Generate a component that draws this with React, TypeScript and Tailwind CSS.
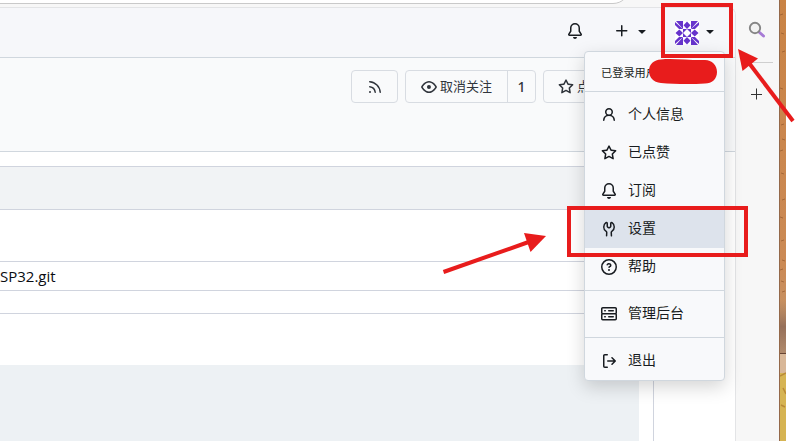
import type { ReactNode } from "react";

const ICONS = {
  bell: "M8 16a2 2 0 0 0 1.985-1.75c.017-.137-.097-.25-.235-.25h-3.5c-.138 0-.252.113-.235.25A2 2 0 0 0 8 16ZM3 5a5 5 0 0 1 10 0v2.947c0 .05.015.098.042.139l1.703 2.555A1.519 1.519 0 0 1 13.482 13H2.518a1.516 1.516 0 0 1-1.263-2.36l1.703-2.554A.255.255 0 0 0 3 7.947Zm5-3.5A3.5 3.5 0 0 0 4.5 5v2.947c0 .346-.102.683-.294.97l-1.703 2.556a.017.017 0 0 0-.003.01l.001.006c0 .002.002.004.004.006l.006.004.007.001h10.964l.007-.001.006-.004.004-.006.001-.007a.017.017 0 0 0-.003-.01l-1.703-2.554a1.745 1.745 0 0 1-.294-.97V5A3.5 3.5 0 0 0 8 1.5Z",
  plus: "M7.75 2a.75.75 0 0 1 .75.75V7h4.25a.75.75 0 0 1 0 1.5H8.5v4.25a.75.75 0 0 1-1.5 0V8.5H2.75a.75.75 0 0 1 0-1.5H7V2.75A.75.75 0 0 1 7.75 2Z",
  triangleDown: "m4.427 7.427 3.396 3.396a.25.25 0 0 0 .354 0l3.396-3.396A.25.25 0 0 0 11.396 7H4.604a.25.25 0 0 0-.177.427Z",
  rss: "M2.002 2.725a.75.75 0 0 1 .797-.699C8.79 2.42 13.58 7.21 13.974 13.201a.75.75 0 0 1-1.497.098 10.502 10.502 0 0 0-9.776-9.776.747.747 0 0 1-.7-.798ZM2.84 7.05h-.002a7.002 7.002 0 0 1 6.113 6.111.75.75 0 0 1-1.49.178 5.503 5.503 0 0 0-4.8-4.8.75.75 0 0 1 .179-1.489ZM2 13a1 1 0 1 1 2 0 1 1 0 0 1-2 0Z",
  eye: "M8 2c1.981 0 3.671.992 4.933 2.078 1.27 1.091 2.187 2.345 2.637 3.023a1.62 1.62 0 0 1 0 1.798c-.45.678-1.367 1.932-2.637 3.023C11.67 13.008 9.981 14 8 14c-1.981 0-3.671-.992-4.933-2.078C1.797 10.83.88 9.576.43 8.898a1.62 1.62 0 0 1 0-1.798c.45-.677 1.367-1.931 2.637-3.022C4.33 2.992 6.019 2 8 2ZM1.679 7.932a.12.12 0 0 0 0 .136c.411.622 1.241 1.75 2.366 2.717C5.176 11.758 6.527 12.5 8 12.5c1.473 0 2.825-.742 3.955-1.715 1.124-.967 1.954-2.096 2.366-2.717a.12.12 0 0 0 0-.136c-.412-.621-1.242-1.75-2.366-2.717C10.824 4.242 9.473 3.5 8 3.5c-1.473 0-2.825.742-3.955 1.715-1.124.967-1.954 2.096-2.366 2.717ZM8 10a2 2 0 1 1-.001-3.999A2 2 0 0 1 8 10Z",
  star: "M8 .25a.75.75 0 0 1 .673.418l1.882 3.815 4.21.612a.75.75 0 0 1 .416 1.279l-3.046 2.97.719 4.192a.751.751 0 0 1-1.088.791L8 12.347l-3.766 1.98a.75.75 0 0 1-1.088-.79l.72-4.194L.818 6.374a.75.75 0 0 1 .416-1.28l4.21-.611L7.327.668A.75.75 0 0 1 8 .25Zm0 2.445L6.615 5.5a.75.75 0 0 1-.564.41l-3.097.45 2.24 2.184a.75.75 0 0 1 .216.664l-.528 3.084 2.769-1.456a.75.75 0 0 1 .698 0l2.77 1.456-.53-3.084a.75.75 0 0 1 .216-.664l2.24-2.183-3.096-.45a.75.75 0 0 1-.564-.41L8 2.694Z",
  person: "M10.561 8.073a6.005 6.005 0 0 1 3.432 5.142.75.75 0 1 1-1.498.07 4.5 4.5 0 0 0-8.99 0 .75.75 0 0 1-1.498-.07 6.004 6.004 0 0 1 3.431-5.142 3.999 3.999 0 1 1 5.123 0ZM10.5 5a2.5 2.5 0 1 0-5 0 2.5 2.5 0 0 0 5 0Z",
  tools: "M5.433 2.304A4.492 4.492 0 0 0 3.5 6c0 1.598.832 3.002 2.09 3.802.518.328.929.923.902 1.64v.008l-.164 3.337a.75.75 0 1 1-1.498-.073l.163-3.33c.002-.085-.05-.216-.207-.316A5.996 5.996 0 0 1 2 6a5.993 5.993 0 0 1 2.567-4.92 1.482 1.482 0 0 1 1.673-.04c.462.296.76.827.76 1.423v2.82c0 .082.041.16.11.206l.75.51a.25.25 0 0 0 .28 0l.75-.51A.249.249 0 0 0 9 5.282V2.463c0-.596.298-1.127.76-1.423a1.482 1.482 0 0 1 1.673.04A5.993 5.993 0 0 1 14 6a5.996 5.996 0 0 1-2.786 5.068c-.157.1-.209.23-.207.315l.163 3.33a.752.752 0 0 1-1.094.714.75.75 0 0 1-.404-.64l-.164-3.345c-.027-.717.384-1.312.902-1.64A4.495 4.495 0 0 0 12.5 6a4.492 4.492 0 0 0-1.933-3.696c-.024.017-.067.067-.067.16v2.818a1.75 1.75 0 0 1-.767 1.448l-.75.51a1.75 1.75 0 0 1-1.966 0l-.75-.51A1.75 1.75 0 0 1 5.5 5.282V2.463c0-.092-.043-.142-.067-.159Z",
  question: "M0 8a8 8 0 1 1 16 0A8 8 0 0 1 0 8Zm8-6.5a6.5 6.5 0 1 0 0 13 6.5 6.5 0 0 0 0-13ZM6.92 6.085h.001a.749.749 0 1 1-1.342-.67c.169-.339.436-.701.849-.977C6.845 4.16 7.369 4 8 4a2.756 2.756 0 0 1 1.637.525c.503.377.863.965.863 1.725 0 .448-.115.83-.329 1.15-.205.307-.47.513-.692.662-.109.072-.22.138-.313.195l-.006.004a6.24 6.24 0 0 0-.26.16.952.952 0 0 0-.276.245.75.75 0 0 1-1.248-.832c.184-.264.42-.489.692-.661.103-.067.207-.132.313-.195l.007-.004c.1-.061.182-.11.258-.161a.969.969 0 0 0 .277-.245C8.96 6.514 9 6.427 9 6.25a.612.612 0 0 0-.262-.525A1.27 1.27 0 0 0 8 5.5c-.369 0-.595.09-.74.187a1.01 1.01 0 0 0-.34.398ZM9 11a1 1 0 1 1-2 0 1 1 0 0 1 2 0Z",
  server: "M1.75 1h12.5c.966 0 1.75.784 1.75 1.75v4c0 .372-.116.717-.314 1 .198.283.314.628.314 1v4a1.75 1.75 0 0 1-1.75 1.75H1.75A1.75 1.75 0 0 1 0 12.75v-4c0-.358.109-.707.314-1a1.739 1.739 0 0 1-.314-1v-4C0 1.784.784 1 1.75 1ZM1.5 2.75v4c0 .138.112.25.25.25h12.5a.25.25 0 0 0 .25-.25v-4a.25.25 0 0 0-.25-.25H1.75a.25.25 0 0 0-.25.25Zm.25 5.75a.25.25 0 0 0-.25.25v4c0 .138.112.25.25.25h12.5a.25.25 0 0 0 .25-.25v-4a.25.25 0 0 0-.25-.25ZM7 4.75A.75.75 0 0 1 7.75 4h4.5a.75.75 0 0 1 0 1.5h-4.5A.75.75 0 0 1 7 4.75ZM7.75 10h4.5a.75.75 0 0 1 0 1.5h-4.5a.75.75 0 0 1 0-1.5ZM3 4.75A.75.75 0 0 1 3.75 4h.5a.75.75 0 0 1 0 1.5h-.5A.75.75 0 0 1 3 4.75ZM3.75 10h.5a.75.75 0 0 1 0 1.5h-.5a.75.75 0 0 1 0-1.5Z",
  signOut: "M2 2.75C2 1.784 2.784 1 3.75 1h2.5a.75.75 0 0 1 0 1.5h-2.5a.25.25 0 0 0-.25.25v10.5c0 .138.112.25.25.25h2.5a.75.75 0 0 1 0 1.5h-2.5A1.75 1.75 0 0 1 2 13.25Zm10.44 4.5-1.97-1.97a.749.749 0 0 1 .326-1.275.749.749 0 0 1 .734.215l3.25 3.25a.75.75 0 0 1 0 1.06l-3.25 3.25a.749.749 0 0 1-1.275-.326.749.749 0 0 1 .215-.734l1.97-1.97H6.75a.75.75 0 0 1 0-1.5Z",
};

type IconName = keyof typeof ICONS;

function Icon({ name, className = "size-4" }: { name: IconName; className?: string }) {
  return (
    <svg viewBox="0 0 16 16" fill="currentColor" className={`shrink-0 ${className}`}>
      <path d={ICONS[name]} />
    </svg>
  );
}

function Avatar() {
  return (
    <svg viewBox="0 0 24 24" className="size-6 shrink-0 bg-white" fill="#6633cc">
      {/* corner wedges */}
      <path d="M1 0H8V8ZM23 0H16V8ZM1 24H8V16ZM23 24H16V16Z" />
      <path d="M0 1L8 8L4 8L0 4ZM24 1L16 8L20 8L24 4ZM0 23L8 16L4 16L0 20ZM24 23L16 16L20 16L24 20Z" />
      {/* diamonds on the four sides and the ring in the centre */}
      {[0, 90, 180, 270].map((angle) => (
        <g key={angle} transform={`rotate(${angle} 12 12)`}>
          <path d="M12 0.500L15.500 4.300L12 8L8.500 4.300Z" />
          <path d="M8 8H12L8 12Z" />
        </g>
      ))}
    </svg>
  );
}

const MENU: { icon: IconName; label: string; active?: boolean }[][] = [
  [
    { icon: "person", label: "个人信息" },
    { icon: "star", label: "已点赞" },
    { icon: "bell", label: "订阅" },
    { icon: "tools", label: "设置", active: true },
    { icon: "question", label: "帮助" },
  ],
  [{ icon: "server", label: "管理后台" }],
  [{ icon: "signOut", label: "退出" }],
];

function UserMenu() {
  return (
    <div className="absolute left-[584px] top-[51px] w-[141px] rounded border border-[#d0d7de] bg-[#f8f9fb] text-[#181c21] shadow-[0_6px_18px_rgba(0,0,0,0.17)]">
      <div className="flex h-[39px] items-center whitespace-nowrap pl-4 pt-[3px] text-[11.2px]">已登录用户</div>
      {MENU.map((group, i) => (
        <div key={i} className={`border-t border-[#d0d7de] pt-1 ${i < 2 ? "pb-1" : ""}`}>
          {group.map((item) => (
            <div
              key={item.label}
              className={`flex h-[38px] items-center gap-[11px] pl-4 text-[14px] ${item.active ? "bg-[#dde3ec]" : ""}`}
            >
              <Icon name={item.icon} />
              <span className="-mt-1">{item.label}</span>
            </div>
          ))}
        </div>
      ))}
    </div>
  );
}

function Button({ children, className }: { children: ReactNode; className: string }) {
  return (
    <div className={`flex h-[33px] shrink-0 items-center rounded border border-[#d8dce2] text-[14px] text-[#30353c] ${className}`}>
      {children}
    </div>
  );
}

function Annotations() {
  return (
    <>
      <div className="absolute left-[661px] top-[3px] h-[55px] w-[72px] border-4 border-[#e81c1c]" />
      <div className="absolute left-[567px] top-[206px] h-[51px] w-[181px] border-4 border-[#e81c1c]" />
      <svg className="absolute inset-0 h-[441px] w-[795px]" fill="#e81c1c">
        <path d="M661 59.5C672 58 690 60.5 705 60C712 60 717 65 717 72C717 79 712 83.500 705 83.500C690 84.500 673 84 661 83C653 82.500 649 77 649 71C649 64 654 60 661 59.500Z" />
        <path d="M738 49L758 58.500L742.500 71Z" />
        <path d="M749 63L793 121" stroke="#e81c1c" strokeWidth="4" />
        <path d="M546 236L524 233L530.500 252Z" />
        <path d="M443.500 272L530 241.500" stroke="#e81c1c" strokeWidth="4" />
      </svg>
    </>
  );
}

export default function App() {
  return (
    <div className="relative flex h-[441px] w-[795px] overflow-hidden bg-white font-['Noto_Sans','Noto_Sans_CJK_SC',sans-serif]">
      <div className="flex w-[736px] shrink-0 flex-col bg-[#f7f7f7]">
        {/* bottom edge of the address bar */}
        <div className="h-[7px] overflow-hidden">
          <div className="-ml-5 -mt-[30px] h-[34px] w-[650px] rounded-full border border-[#c9c9c9] bg-white" />
        </div>
        <div className="flex min-h-0 flex-1 flex-col overflow-hidden rounded-tr-lg border-r border-t border-[#e3e4e6] bg-white">
          <div className="flex h-[50px] shrink-0 items-center border-b border-[#d0d7de] bg-[#f6f7fa] pl-[567px] text-[#181c21]">
            <Icon name="bell" className="-mt-[3px] size-4" />
            <Icon name="plus" className="-mt-[3px] ml-[31px] size-4" />
            <Icon name="triangleDown" className="-mt-[3px] ml-1 size-4" />
            <div className="ml-[25px] flex items-center">
              <Avatar />
              <Icon name="triangleDown" className="-mt-[3px] ml-[3px] size-4" />
            </div>
          </div>
          <div className="flex h-[94px] shrink-0 items-start border-b border-[#d0d7de] bg-[#f9fafb] pl-[351px] pt-3">
            <Button className="w-[47px] justify-center">
              <Icon name="rss" />
            </Button>
            <Button className="ml-[7px] w-[131px]">
              <div className="flex h-full w-[102px] items-center gap-[3px] border-r border-[#d8dce2] pl-[15px]">
                <Icon name="eye" />
                <span className="text-[13px]">取消关注</span>
              </div>
              <span className="flex-1 text-center font-medium">1</span>
            </Button>
            <Button className="ml-[7px] w-[110px] gap-[3px] pl-[14px]">
              <Icon name="star" />
              <span className="text-[13px]">点赞</span>
            </Button>
          </div>
          {/* repository content */}
          <div className="mt-[14px] w-[654px] shrink-0">
            <div className="h-11 border-y border-[#d0d4de] bg-[#f1f3f5]" />
            <div className="h-[51px]" />
            <div className="flex h-[30px] items-center border-y border-[#d0d4de] font-['Open_Sans',sans-serif] text-[15px] text-[#0a0d12]">
              SP32.git
            </div>
            <div className="h-[23px] border-b border-[#d0d4de]" />
          </div>
          <div className="flex w-[654px] flex-1 border-r border-[#d0d4de] pr-[14px] pt-[51px]">
            <div className="flex-1 bg-[#edf1f4]" />
          </div>
        </div>
      </div>
      {/* browser side bar */}
      <div className="flex w-[43px] shrink-0 flex-col items-center bg-[#f7f7f7] pr-[2px]">
        <svg viewBox="0 0 18 18" className="mt-[21px] size-[18px]" fill="none" strokeLinecap="round">
          <path d="M11 11L15.500 15" stroke="#a77bd6" strokeWidth="3" />
          <circle cx="7" cy="7" r="5.200" fill="#f2f2f2" stroke="#858585" strokeWidth="1.900" />
        </svg>
        <div className="ml-[2px] mt-[23px] h-px w-[30px] bg-[#cfcfcf]" />
        <svg viewBox="0 0 12 12" className="mt-[25px] size-3" stroke="#333" fill="none">
          <path d="M5.500 0.500V11.500M0 6.500H11" />
        </svg>
      </div>
      {/* strip of desktop wallpaper */}
      <div className="relative w-[7px] shrink-0 border-l border-[#94694a] bg-linear-to-b from-[#c98345] via-[#cb8a55] via-60% to-[#c49468] to-75%">
        <svg className="absolute inset-0 h-full w-full">
          <defs>
            <linearGradient id="shade" x1="0" y1="0" x2="0" y2="1">
              <stop offset="0" stopColor="#a37b5e" stopOpacity="0" />
              <stop offset="0.5" stopColor="#96705a" />
              <stop offset="1" stopColor="#b08a6c" />
            </linearGradient>
          </defs>
          {[15, 33, 52, 88, 125, 139, 151, 173, 200, 217, 241, 260, 270, 281, 292].map((y, i) => (
            <path key={y} d={`M${i % 3} ${y}l3 ${(i % 2) * 2 - 1}`} stroke="#8a5228" strokeOpacity="0.6" />
          ))}
          <rect y="300" width="7" height="53" fill="url(#shade)" />
          <rect y="353" width="7" height="1" fill="#674433" />
          <rect y="354" width="7" height="19" fill="#d8b798" />
          <rect y="373" width="7" height="68" fill="#d6b453" />
          <path d="M0 376l6-3M1 405l4 2M3 388l3 6" stroke="#b98a38" strokeWidth="1.500" />
        </svg>
      </div>
      <UserMenu />
      <Annotations />
    </div>
  );
}
